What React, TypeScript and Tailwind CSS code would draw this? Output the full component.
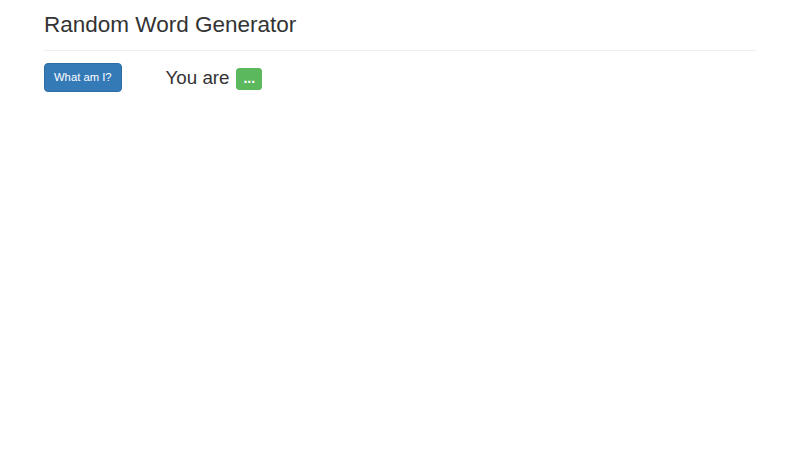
export default function App() {
  return (
    <div
      className="min-h-[450px] w-[800px] bg-white text-[#333]"
      style={{ fontFamily: '"Liberation Sans", Arial, sans-serif' }}
    >
      <div className="px-[44px]">
        <div className="border-b border-[#eee] pt-[12.5px] pb-[12.5px]">
          <h1 className="text-[22.5px] leading-[24.75px] font-normal">Random Word Generator</h1>
        </div>
        <div className="mt-[12.5px] flex items-start">
          <button
            type="button"
            className="h-[29px] rounded-[4px] border border-[#2e6da4] bg-[#337ab7] px-[9px] text-[11.25px] leading-none text-white"
          >
            What am I?
          </button>
          <div className="ml-[44px] mt-[3px] flex items-center text-[18.75px] leading-[22px]">
            <span>You are</span>
            <span className="ml-[7px] mt-[2px] inline-flex h-[22px] items-center justify-center rounded-[3.5px] bg-[#5cb85c] px-[7px] pb-[2px] text-[14px] font-bold leading-none text-white">
              ...
            </span>
          </div>
        </div>
      </div>
    </div>
  );
}
